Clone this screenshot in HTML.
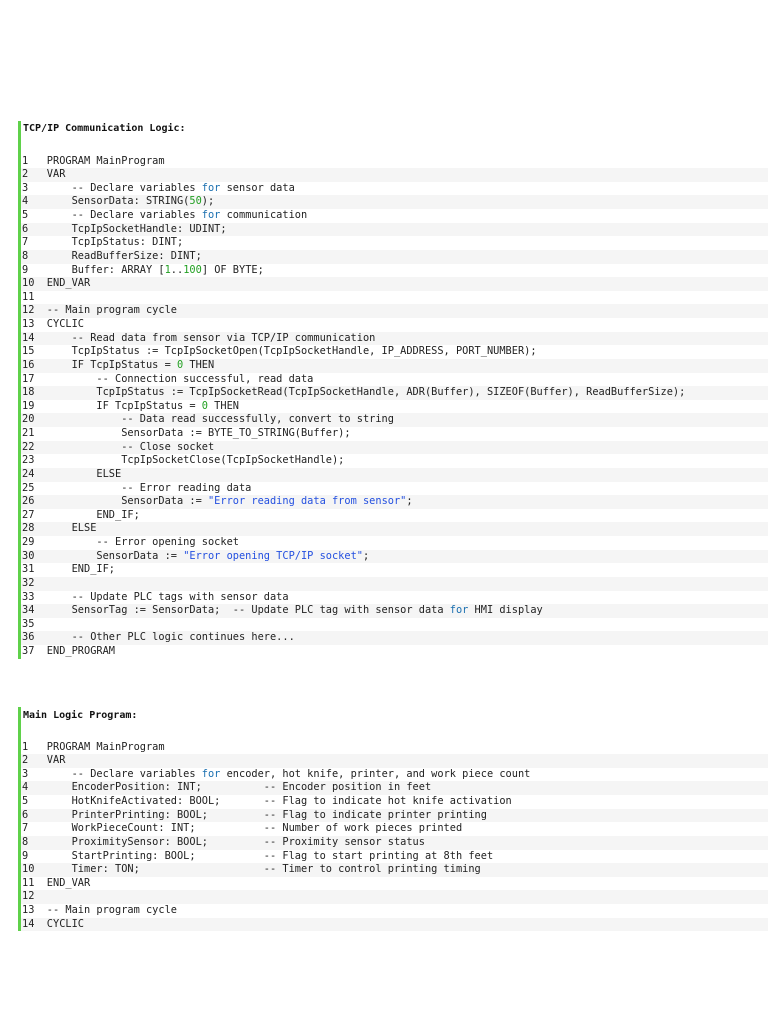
<!DOCTYPE html>
<html><head><meta charset="utf-8"><style>
html,body{margin:0;padding:0;background:#fff;width:768px;height:1024px;overflow:hidden;position:relative}
.bar{position:absolute;left:18px;width:3px;background:#5fd14a}
.title{position:absolute;left:23px;font:bold 10px/13.64px "DejaVu Sans Mono",monospace;color:#111;white-space:pre}
.blk{position:absolute;left:21px;right:0}
.r{height:13.64px;font:10.3px/13.64px "DejaVu Sans Mono",monospace;color:#222;white-space:pre;padding-left:1px}
.r:nth-child(even){background:#f5f5f5}
.k{color:#1a6fb0}.n{color:#22a022}.s{color:#2450e0}
</style></head><body>
<div class="bar" style="top:121px;height:538px"></div>
<div class="title" style="top:122px">TCP/IP Communication Logic:</div>
<div class="blk" style="top:154.5px">
<div class="r">1   PROGRAM MainProgram</div>
<div class="r">2   VAR</div>
<div class="r">3       -- Declare variables <span class="k">for</span> sensor data</div>
<div class="r">4       SensorData: STRING(<span class="n">50</span>);</div>
<div class="r">5       -- Declare variables <span class="k">for</span> communication</div>
<div class="r">6       TcpIpSocketHandle: UDINT;</div>
<div class="r">7       TcpIpStatus: DINT;</div>
<div class="r">8       ReadBufferSize: DINT;</div>
<div class="r">9       Buffer: ARRAY [<span class="n">1</span>..<span class="n">100</span>] OF BYTE;</div>
<div class="r">10  END_VAR</div>
<div class="r">11</div>
<div class="r">12  -- Main program cycle</div>
<div class="r">13  CYCLIC</div>
<div class="r">14      -- Read data from sensor via TCP/IP communication</div>
<div class="r">15      TcpIpStatus := TcpIpSocketOpen(TcpIpSocketHandle, IP_ADDRESS, PORT_NUMBER);</div>
<div class="r">16      IF TcpIpStatus = <span class="n">0</span> THEN</div>
<div class="r">17          -- Connection successful, read data</div>
<div class="r">18          TcpIpStatus := TcpIpSocketRead(TcpIpSocketHandle, ADR(Buffer), SIZEOF(Buffer), ReadBufferSize);</div>
<div class="r">19          IF TcpIpStatus = <span class="n">0</span> THEN</div>
<div class="r">20              -- Data read successfully, convert to string</div>
<div class="r">21              SensorData := BYTE_TO_STRING(Buffer);</div>
<div class="r">22              -- Close socket</div>
<div class="r">23              TcpIpSocketClose(TcpIpSocketHandle);</div>
<div class="r">24          ELSE</div>
<div class="r">25              -- Error reading data</div>
<div class="r">26              SensorData := <span class="s">"Error reading data from sensor"</span>;</div>
<div class="r">27          END_IF;</div>
<div class="r">28      ELSE</div>
<div class="r">29          -- Error opening socket</div>
<div class="r">30          SensorData := <span class="s">"Error opening TCP/IP socket"</span>;</div>
<div class="r">31      END_IF;</div>
<div class="r">32</div>
<div class="r">33      -- Update PLC tags with sensor data</div>
<div class="r">34      SensorTag := SensorData;  -- Update PLC tag with sensor data <span class="k">for</span> HMI display</div>
<div class="r">35</div>
<div class="r">36      -- Other PLC logic continues here...</div>
<div class="r">37  END_PROGRAM</div>
</div>
<div class="bar" style="top:707px;height:224px"></div>
<div class="title" style="top:709px">Main Logic Program:</div>
<div class="blk" style="top:740.5px">
<div class="r">1   PROGRAM MainProgram</div>
<div class="r">2   VAR</div>
<div class="r">3       -- Declare variables <span class="k">for</span> encoder, hot knife, printer, and work piece count</div>
<div class="r">4       EncoderPosition: INT;          -- Encoder position in feet</div>
<div class="r">5       HotKnifeActivated: BOOL;       -- Flag to indicate hot knife activation</div>
<div class="r">6       PrinterPrinting: BOOL;         -- Flag to indicate printer printing</div>
<div class="r">7       WorkPieceCount: INT;           -- Number of work pieces printed</div>
<div class="r">8       ProximitySensor: BOOL;         -- Proximity sensor status</div>
<div class="r">9       StartPrinting: BOOL;           -- Flag to start printing at 8th feet</div>
<div class="r">10      Timer: TON;                    -- Timer to control printing timing</div>
<div class="r">11  END_VAR</div>
<div class="r">12</div>
<div class="r">13  -- Main program cycle</div>
<div class="r">14  CYCLIC</div>
</div>
</body></html>
